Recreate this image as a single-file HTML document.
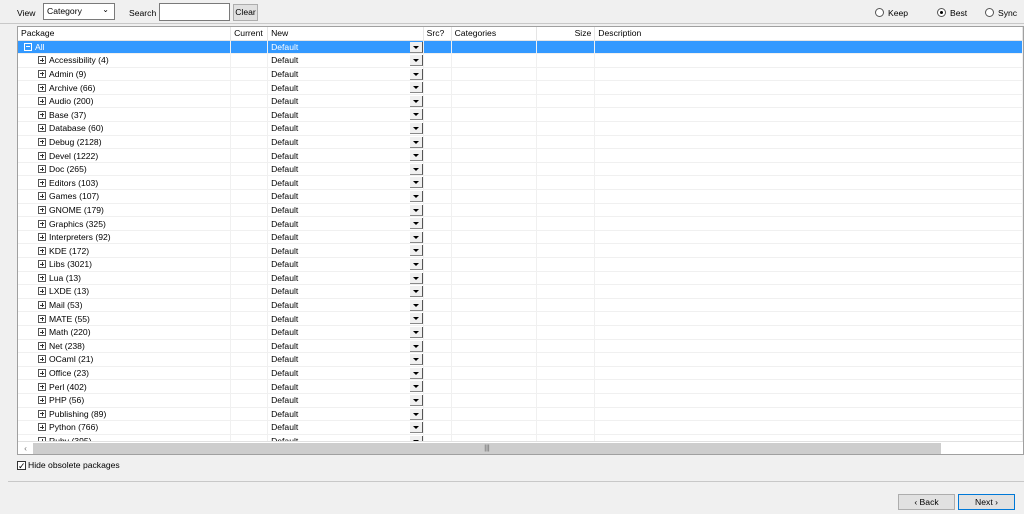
<!DOCTYPE html>
<html><head><style>
*{box-sizing:border-box;margin:0;padding:0}
body{width:1024px;height:514px;background:#f0f0f0;font-family:"Liberation Sans",sans-serif;font-size:8.6px;color:#000;position:relative;overflow:hidden}
.a{position:absolute}
.list{left:17px;top:26px;width:1007px;height:429px;background:#fff;border:1px solid #a0a0a0;overflow:hidden}
table{border-collapse:collapse;table-layout:fixed;position:absolute;left:0;top:0}
td{height:13.6px;padding:0 0 0 3px;border-right:1px solid #f0f0f0;border-bottom:1px solid #f0f0f0;white-space:nowrap;overflow:hidden;line-height:12px}
tr.h td{height:13px;border-right:1px solid #e5e5e5;border-bottom:1px solid #e5e5e5;background:#fff}
tr.sel td{background:#3399ff;color:#fff}
.bx{display:inline-block;width:8px;height:8px;border:1px solid #555;vertical-align:-1px;margin-right:3px;position:relative}
.bx:before{content:"";position:absolute;left:1px;top:2.5px;width:4px;height:1px;background:#333}
.bx.p:after{content:"";position:absolute;left:2.5px;top:1px;width:1px;height:4px;background:#333}
.sel .bx{border-color:#fff}.sel .bx:before{background:#fff}
.dd{position:relative}
.dd i{position:absolute;right:0;top:1px;width:13px;height:11px;background:#f0f0f0;border-right:1px solid #555;border-bottom:1px solid #888}
.dd i:after{content:"";position:absolute;left:3px;top:4px;border-left:3px solid transparent;border-right:3px solid transparent;border-top:3px solid #000}
.btn{background:#e1e1e1;border:1px solid #adadad;text-align:center;line-height:14px}
.rad{display:inline-block;width:9px;height:9px;border:1px solid #555;border-radius:50%;vertical-align:-1px;margin-right:4px;background:#fff;position:relative}
.rad.on:after{content:"";position:absolute;left:2px;top:2px;width:3px;height:3px;border-radius:50%;background:#000}
</style></head><body>
<div class="a" style="left:0;top:0;width:1024px;height:24px;border-bottom:1px solid #c8c8c8"></div>
<div class="a" style="left:17px;top:8px">View</div>
<div class="a" style="left:43px;top:3px;width:72px;height:17px;background:#fff;border:1px solid #7a7a7a;padding:2px 3px">Category<span style="position:absolute;right:5px;top:1px;font-size:8px">&#8964;</span></div>
<div class="a" style="left:129px;top:8px">Search</div>
<div class="a" style="left:159px;top:3px;width:71px;height:18px;background:#fff;border:1px solid #7a7a7a"></div>
<div class="a btn" style="left:233px;top:4px;width:25px;height:17px">Clear</div>
<div class="a" style="left:875px;top:8px"><span class="rad"></span>Keep</div>
<div class="a" style="left:937px;top:8px"><span class="rad on"></span>Best</div>
<div class="a" style="left:985px;top:8px"><span class="rad"></span>Sync</div>

<div class="a list">
<table>
<colgroup><col style="width:213px"><col style="width:37px"><col style="width:156px"><col style="width:28px"><col style="width:86px"><col style="width:58px"><col style="width:429px"></colgroup>
<tr class="h"><td>Package</td><td>Current</td><td>New</td><td>Src?</td><td>Categories</td><td style="text-align:right;padding-right:3px">Size</td><td>Description</td></tr>
<tr class="sel"><td style="padding-left:6px"><span class="bx"></span>All</td><td></td><td class="dd">Default<i></i></td><td></td><td></td><td></td><td></td></tr>
<tbody id="b"></tbody>
</table>
<div class="a" style="left:0;top:414px;width:1007px;height:14px;background:#fff;border-top:1px solid #e0e0e0">
<div class="a" style="left:0;top:0;width:15px;height:13px;text-align:center;color:#777;line-height:13px">&lsaquo;</div>
<div class="a" style="left:15px;top:1px;width:908px;height:12px;background:#cdcdcd;text-align:center;line-height:11px;color:#555;font-size:7px">|||</div>
</div>
</div>
<script>
var c="Accessibility (4)|Admin (9)|Archive (66)|Audio (200)|Base (37)|Database (60)|Debug (2128)|Devel (1222)|Doc (265)|Editors (103)|Games (107)|GNOME (179)|Graphics (325)|Interpreters (92)|KDE (172)|Libs (3021)|Lua (13)|LXDE (13)|Mail (53)|MATE (55)|Math (220)|Net (238)|OCaml (21)|Office (23)|Perl (402)|PHP (56)|Publishing (89)|Python (766)|Ruby (395)".split("|"),h="";
c.forEach(function(n){h+='<tr><td style="padding-left:20px"><span class="bx p"></span>'+n+'</td><td></td><td class="dd">Default<i></i></td><td></td><td></td><td></td><td></td></tr>'});
document.getElementById("b").innerHTML=h;
</script>
<div class="a" style="left:17px;top:460px"><span style="display:inline-block;width:9px;height:9px;border:1px solid #333;background:#fff;vertical-align:-1px;margin-right:2px;font-size:9px;line-height:8px;text-align:center">&#10003;</span>Hide obsolete packages</div>
<div class="a" style="left:8px;top:481px;width:1016px;border-top:1px solid #c8c8c8"></div>
<div class="a btn" style="left:898px;top:494px;width:57px;height:16px">&lsaquo; Back</div>
<div class="a btn" style="left:958px;top:494px;width:57px;height:16px;border-color:#0078d7">Next &rsaquo;</div>
</body></html>
